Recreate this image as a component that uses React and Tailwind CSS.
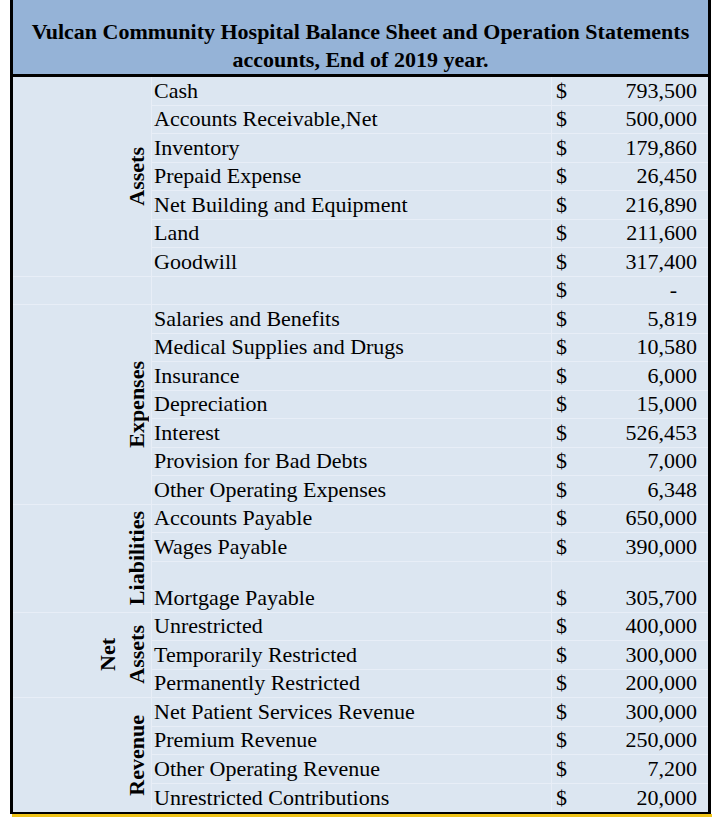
import React from "react";

const groups = [
  {
    label: ["Assets"],
    rows: [
      ["Cash", "793,500"],
      ["Accounts Receivable,Net", "500,000"],
      ["Inventory", "179,860"],
      ["Prepaid Expense", "26,450"],
      ["Net Building and Equipment", "216,890"],
      ["Land", "211,600"],
      ["Goodwill", "317,400"],
    ],
  },
  { label: [], rows: [["", "-"]] },
  {
    label: ["Expenses"],
    rows: [
      ["Salaries and Benefits", "5,819"],
      ["Medical Supplies and Drugs", "10,580"],
      ["Insurance", "6,000"],
      ["Depreciation", "15,000"],
      ["Interest", "526,453"],
      ["Provision for Bad Debts", "7,000"],
      ["Other Operating Expenses", "6,348"],
    ],
  },
  {
    label: ["Liabilities"],
    rows: [
      ["Accounts Payable", "650,000"],
      ["Wages Payable", "390,000"],
      ["Mortgage Payable", "305,700", true],
    ],
  },
  {
    label: ["Net", "Assets"],
    rows: [
      ["Unrestricted", "400,000"],
      ["Temporarily Restricted", "300,000"],
      ["Permanently Restricted", "200,000"],
    ],
  },
  {
    label: ["Revenue"],
    rows: [
      ["Net Patient Services Revenue", "300,000"],
      ["Premium Revenue", "250,000"],
      ["Other Operating Revenue", "7,200"],
      ["Unrestricted Contributions", "20,000"],
    ],
  },
];

function Row({ item, value, tall, last }) {
  return (
    <div
      className={`flex items-end ${tall ? "h-[51px]" : "h-[28.5px]"} ${
        last ? "" : "border-b border-[#e8eef7]"
      }`}
    >
      <div className="w-[400px] h-full flex items-end border-r border-[#e8eef7] pl-[2px] pb-[3px] leading-[22px]">
        {item}
      </div>
      <div className="flex-1 h-full flex items-end justify-between pl-[4px] pr-[11px] pb-[3px] leading-[22px]">
        <span>$</span>
        <span className={value === "-" ? "pr-[20px]" : ""}>{value}</span>
      </div>
    </div>
  );
}

export default function App() {
  return (
    <div className="w-[718px] h-[817px] bg-white pl-[10px] font-['Liberation_Serif','Times_New_Roman',serif] text-[22px] text-black">
      <div className="w-[701px] border-l-[3px] border-r-[3px] border-b-[2px] border-black">
        <div className="h-[77px] bg-[#95b3d7] border-b-[3px] border-black flex items-end justify-center">
          <p className="text-center font-bold leading-[28px]">
            Vulcan Community Hospital Balance Sheet and Operation Statements
            <br />
            accounts, End of 2019 year.
          </p>
        </div>
        <div className="bg-[#dce6f1]">
          {groups.map((g, gi) => {
            const lastGroup = gi === groups.length - 1;
            return (
              <div key={gi} className="flex">
                <div
                  className={`w-[139px] border-r border-[#e8eef7] flex items-center justify-end gap-[7px] pr-[3px] ${
                    lastGroup ? "" : "border-b"
                  }`}
                >
                  {g.label.map((l) => (
                    <span
                      key={l}
                      className="[writing-mode:vertical-rl] rotate-180 font-bold leading-[22px]"
                    >
                      {l}
                    </span>
                  ))}
                </div>
                <div className="flex-1">
                  {g.rows.map((r, ri) => (
                    <Row
                      key={ri}
                      item={r[0]}
                      value={r[1]}
                      tall={r[2]}
                      last={lastGroup && ri === g.rows.length - 1}
                    />
                  ))}
                </div>
              </div>
            );
          })}
        </div>
      </div>
      <div className="ml-[2px] w-[700px] h-[3px] bg-[#f0c419]" />
    </div>
  );
}
